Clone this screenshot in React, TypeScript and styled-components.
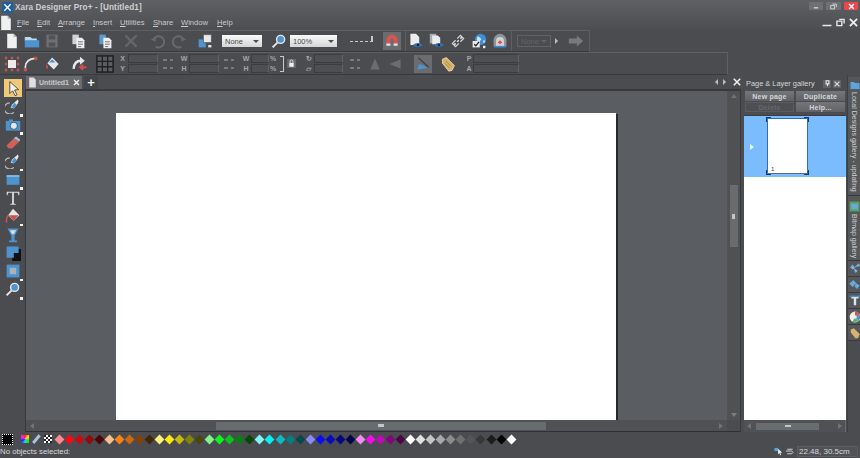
import React from "react";
import styled, { createGlobalStyle } from "styled-components";

const Global = createGlobalStyle`
  html, body { margin: 0; padding: 0; background: #4a4c50; }
  body { font-family: "Liberation Sans", Arial, sans-serif; overflow: hidden; }
  svg { flex: none; }
`;

const Ico = ({ s = 16, children }: { s?: number; children: React.ReactNode }) => (
  <svg width={s} height={s} viewBox="0 0 20 20" fill="none">
    {children}
  </svg>
);

const Doc = ({ c = "#f0f0f0" }: { c?: string }) => (
  <Ico>
    <path d="M4 1h8l4 4v14H4z" fill={c} />
    <path d="M12 1v4h4" fill="#b5b5b5" />
  </Ico>
);
const Folder = () => (
  <Ico>
    <path d="M1 5h7l2 2h6v3H1z" fill="#bcd9ee" />
    <path d="M1 9h18v9H1z" fill="#4d94cf" />
  </Ico>
);
const Save = () => (
  <Ico>
    <path d="M3 2h14v16H3z" fill="#6d6f72" />
    <path d="M6 3h8v5H6zM6 12h8v5H6z" fill="#505255" />
  </Ico>
);
const Copy = ({ paste }: { paste?: boolean }) => (
  <Ico>
    <path d="M3 2h8v12H3z" fill={paste ? "#5b9bd2" : "#cfd2d5"} />
    <path d="M8 6h7l3 3v10H8z" fill="#eeeeee" />
    <path d="M10 11h6M10 14h6M10 17h4" stroke="#55585c" />
  </Ico>
);
const Cross = ({ c = "#63666a", w = 3 }: { c?: string; w?: number }) => (
  <Ico>
    <path d="M3 3l14 14M17 3L3 17" stroke={c} strokeWidth={w} />
  </Ico>
);
const Undo = ({ flip }: { flip?: boolean }) => (
  <Ico>
    <g transform={flip ? "matrix(-1 0 0 1 20 0)" : undefined}>
      <path d="M5 7a7 7 0 1 1 2 10" stroke="#66696d" strokeWidth="2.5" />
      <path d="M1 8l6-3v6z" fill="#66696d" />
    </g>
  </Ico>
);
const Arrange = () => (
  <Ico>
    <path d="M2 8h9v10H2z" fill="#4d94cf" />
    <path d="M8 2h10v10H8z" fill="#e8e8e8" stroke="#55585c" />
    <path d="M14 15h4v3h-4z" fill="#e8e8e8" />
  </Ico>
);
const Zoom = () => (
  <Ico>
    <circle cx="12" cy="8" r="5" fill="#4d94cf" stroke="#e6e6e6" strokeWidth="1.800" />
    <path d="M8 12l-6 6" stroke="#e6e6e6" strokeWidth="2.500" />
  </Ico>
);
const Magnet = () => (
  <Ico>
    <path d="M3 15V9a7 7 0 0 1 14 0v6h-5V9a2 2 0 0 0-4 0v6z" fill="#d9534f" />
    <path d="M3 13h5v3H3zM12 13h5v3h-5z" fill="#dfe6ec" />
  </Ico>
);
const Eye = ({ stacked }: { stacked?: boolean }) => (
  <Ico>
    {stacked && <path d="M1 1h8v12H1z" fill="#a9adb1" />}
    <path d={stacked ? "M4 3h7l3 3v8H4z" : "M3 1h7l4 4v10H3z"} fill="#ececec" />
    <path d="M6 15q6-5 13 0q-7 5-13 0z" fill="#2d76b8" />
    <circle cx="12.500" cy="15" r="1.600" fill="#10263a" />
  </Ico>
);
const Chain = () => (
  <Ico>
    <path d="M5 15l2-2M13 7l2-2M9 11l2-2" stroke="#e2e2e2" strokeWidth="2" />
    <path d="M7 9l-4 4 4 4 4-4M13 11l4-4-4-4-4 4" stroke="#d5d5d5" strokeWidth="1.600" />
  </Ico>
);
const Globe = () => (
  <Ico>
    <circle cx="12" cy="8" r="7" fill="#3f8fd8" />
    <path d="M8 4q4 1 5 4l-3 3-3-2zM15 9l3 1-2 3z" fill="#cfe6f7" />
    <path d="M2 10h9v8H2z" fill="#e9e9e9" />
    <path d="M4 14l2 2 4-5" stroke="#222" strokeWidth="1.600" />
    <path d="M15 16h3v3h-3z" fill="#eee" />
  </Ico>
);
const Dome = () => (
  <Ico>
    <path d="M2 17V9a8 8 0 0 1 16 0v8z" fill="#8f9398" />
    <path d="M5 17V10a5 5 0 0 1 10 0v7z" fill="#cfd3d6" />
    <path d="M7 12l3-3 3 3-3 2z" fill="#d9534f" />
    <path d="M3 16h14v2H3z" fill="#3f8fd8" />
  </Ico>
);
const NextArrow = () => (
  <Ico>
    <path d="M1 7h10V3l8 7-8 7v-4H1z" fill="#76797d" />
  </Ico>
);
const Transform = () => (
  <Ico>
    <path d="M5 5h10v10H5z" fill="#ececec" />
    <path d="M1 1h3v3H1zM8.500 1h3v3h-3zM16 1h3v3h-3zM1 8.500h3v3H1zM16 8.500h3v3h-3zM1 16h3v3H1zM8.500 16h3v3h-3zM16 16h3v3h-3z" fill="#c8524e" />
  </Ico>
);
const Curve = () => (
  <Ico>
    <path d="M3 18V13Q4 4 15 3" stroke="#e4e4e4" strokeWidth="2" />
    <path d="M1 15h4v4H1zM14 1h4v4h-4z" fill="#c8524e" />
  </Ico>
);
const Fill = () => (
  <Ico>
    <path d="M9 2l8 8-6 7-8-8z" fill="#e8e8e8" />
    <path d="M5 8l4-4 4 4z" fill="#4d94cf" />
    <path d="M2 10q-2 5 1 6 2-2-1-6z" fill="#c8524e" />
  </Ico>
);
const Rotate = () => (
  <Ico>
    <path d="M2 16Q3 6 11 6" stroke="#e8e8e8" strokeWidth="3" />
    <path d="M10 1l6 5-6 5z" fill="#e8e8e8" />
    <path d="M11 14h7M14 11l-4 3 4 3" stroke="#c8524e" strokeWidth="2.500" />
  </Ico>
);
const GridBox = () => (
  <Ico s={18}>
    <path d="M0 0h20v20H0z" fill="#26282b" />
    <path d="M2 2h16v16H2z" fill="#5a5d61" />
    <path d="M7 1v18M13 1v18M1 7h18M1 13h18" stroke="#1f2123" strokeWidth="1.500" />
  </Ico>
);
const Lock = () => (
  <Ico s={11}>
    <path d="M2 2h16v16H2z" fill="#6a6d71" />
    <path d="M6 9h8v7H6z" fill="#f0f0f0" />
    <path d="M7.500 9V6a2.500 2.500 0 0 1 5 0v3" stroke="#f0f0f0" strokeWidth="1.500" />
  </Ico>
);
const Tag = () => (
  <Ico>
    <path d="M3 4l5-2 10 10-3 6-4 1L3 9z" fill="#d8b36e" stroke="#f0dfb4" />
    <path d="M7 6l7 7M6 9l6 6" stroke="#9a7a3f" />
  </Ico>
);
const PenTool = () => (
  <Ico>
    <path d="M4 2l13 12" stroke="#3a3c40" strokeWidth="1.500" />
    <path d="M3 17l2-7 6 2 5 3-7 1z" fill="#4d94cf" />
  </Ico>
);
const Triangle = ({ d }: { d: string }) => (
  <Ico>
    <path d={d} fill="#696c70" />
  </Ico>
);
const ArrowTool = () => (
  <Ico>
    <path d="M6 2l11 10-5 .5 3 6-2.500 1-3-6L6 17z" fill="#f5f1e6" stroke="#33302a" />
  </Ico>
);
const Brush = () => (
  <Ico>
    <path d="M6 6a7 7 0 1 0 5 12" stroke="#b8bbbe" strokeWidth="1.500" />
    <path d="M16 2q2 2 0 5l-5 6-4-1 2-4z" fill="#e8e8e8" />
    <path d="M12 6l3 3-4 4-3-2z" fill="#4d94cf" />
  </Ico>
);
const Camera = () => (
  <Ico>
    <path d="M1 5h18v12H1z" fill="#4d94cf" />
    <path d="M5 3h5v2H5z" fill="#4d94cf" />
    <circle cx="11" cy="11" r="4.500" fill="#dfe7ee" stroke="#26455f" />
  </Ico>
);
const Eraser = () => (
  <Ico>
    <path d="M2 13l9-9 7 4-9 9-5-.5z" fill="#d0605a" />
    <path d="M11 4l3-2 5 4-1 2z" fill="#9cc3e0" />
  </Ico>
);
const Rect = () => (
  <Ico>
    <path d="M2 4h16v12H2z" fill="#4d94cf" />
    <path d="M2 4h16v2H2z" fill="#8dbde4" />
  </Ico>
);
const TextTool = () => (
  <Ico s={18}>
    <path d="M3 3h14v4h-.8l-1-2.800h-4.200v11.800l2 .8v.700H7v-.700l2-.8V4.200H4.800L3.800 7H3z" fill="#dcdcdc" />
  </Ico>
);
const Bucket = () => (
  <Ico>
    <path d="M10 1l8 8-7 7-7-7z" fill="#e6e6e6" />
    <path d="M5 9h12l-6 7z" fill="#c8524e" />
    <path d="M4 9q-3 4-2 9" stroke="#c8524e" strokeWidth="2" />
  </Ico>
);
const Glass = () => (
  <Ico>
    <path d="M3 2h14l-5 9v6h3v2H5v-2h3v-6z" fill="#4d94cf" />
    <path d="M6 4h8l-3 5H9z" fill="#dcdcdc" />
  </Ico>
);
const Shadow = () => (
  <Ico>
    <path d="M5 5h15v15H9v-6H5z" fill="#111" />
    <path d="M2 2h15v8h-6v6H2z" fill="#4d94cf" />
  </Ico>
);
const Bevel = () => (
  <Ico>
    <path d="M2 2h16v16H2z" fill="#4d94cf" />
    <path d="M6 6h8v8H6z" fill="#a9b2ba" />
  </Ico>
);
const Blocks = () => (
  <Ico s={13}>
    <path d="M3 8l4-4 4 4-4 4zM9 14l3-3 3 3-3 3zM13 5l3-3 3 3-3 3z" fill="#67a8dc" />
    <path d="M7 8l6 6M11 8l4-3" stroke="#eee" />
  </Ico>
);
const Wheel = () => (
  <Ico s={12}>
    <circle cx="10" cy="10" r="9" fill="#eeeeee" />
    <path d="M10 10V1a9 9 0 0 1 8 5z" fill="#d9534f" />
    <path d="M10 10l8-4a9 9 0 0 1-2 10z" fill="#4d94cf" />
    <path d="M10 10l6 6a9 9 0 0 1-10 2z" fill="#58b368" />
    <circle cx="10" cy="10" r="3" fill="#eee" />
  </Ico>
);

const CornerMark = styled.span`
  position: absolute;
  right: -1px;
  bottom: -1px;
  width: 2.500px;
  height: 2.500px;
  background: #f4f4f4;
`;

const Window = styled.div`
  width: 860px;
  height: 458px;
  display: flex;
  flex-direction: column;
  overflow: hidden;
  background: #4a4c50;
  color: #d4d5d6;
`;

const TitleBar = styled.div`
  height: 15px;
  flex: none;
  display: flex;
  align-items: center;
  padding: 0 2px;
  background: linear-gradient(#5e6063, #55575a);
`;

const AppLogo = styled.div`
  width: 11px;
  height: 11px;
  background: #1c5fa3;
  display: flex;
  align-items: center;
  justify-content: center;
`;

const TitleText = styled.div`
  margin-left: 2px;
  font-size: 8.200px;
  font-weight: 700;
  color: #cfd0d1;
  letter-spacing: 0.1px;
  white-space: nowrap;
`;

const Caps = styled.div`
  margin-left: auto;
  display: flex;
  gap: 3px;
  align-self: flex-start;
  margin-top: 2px;
`;

const CapButton = styled.div<{ $w: number; $red?: boolean }>`
  width: ${(p) => p.$w}px;
  height: 8px;
  border-radius: 1px;
  background: ${(p) => (p.$red ? "#e8474c" : "#6e7073")};
  display: flex;
  align-items: center;
  justify-content: center;
`;

const MenuBar = styled.div`
  height: 15px;
  flex: none;
  display: flex;
  align-items: center;
  background: linear-gradient(#55575a, #4c4e51);
`;

const MenuDoc = styled.div`
  width: 15px;
  height: 15px;
  display: flex;
  align-items: center;
  margin-left: -2px;
  margin-right: 4px;
`;

const MenuItem = styled.span<{ $w: number }>`
  width: ${(p) => p.$w}px;
  font-size: 7.600px;
  color: #c9cacb;
  white-space: nowrap;
`;

const MdiCaps = styled.div`
  margin-left: auto;
  margin-right: 2px;
  display: flex;
  gap: 4px;
  align-items: center;
`;

const ToolRow = styled.div<{ $w: number; $h: number }>`
  width: ${(p) => p.$w}px;
  height: ${(p) => p.$h}px;
  flex: none;
  box-sizing: border-box;
  display: flex;
  align-items: center;
  border-top: 1px solid #5e6063;
  border-right: 1px solid #5e6063;
  border-bottom: 1px solid #38393c;
  background: #4a4c50;
`;

const Slot = styled.div<{ $w?: number; $ml?: number }>`
  flex: none;
  width: ${(p) => p.$w ?? 20}px;
  margin-left: ${(p) => p.$ml ?? 0}px;
  display: flex;
  align-items: center;
  justify-content: center;
  position: relative;
`;

const Pressed = styled(Slot)`
  height: 18px;
  background: #6a6d70;
`;

const Select = styled.div<{ $w: number; $ml: number; $off?: boolean }>`
  flex: none;
  box-sizing: border-box;
  width: ${(p) => p.$w}px;
  height: 12px;
  margin-left: ${(p) => p.$ml}px;
  padding: 0 3px;
  display: flex;
  align-items: center;
  justify-content: space-between;
  font-size: 7.500px;
  color: ${(p) => (p.$off ? "#626468" : "#4a4c50")};
  background: ${(p) => (p.$off ? "transparent" : "linear-gradient(#fafafa,#d5d6d7)")};
  border: ${(p) => (p.$off ? "1px solid #606266" : "none")};
  &::after {
    content: "";
    border: 3px solid transparent;
    border-top: 3.500px solid ${(p) => (p.$off ? "#626468" : "#4a4c50")};
    margin-top: 3px;
  }
`;

const Divider = styled.div<{ $ml: number }>`
  flex: none;
  width: 1px;
  align-self: stretch;
  margin-left: ${(p) => p.$ml}px;
  background: #5d5f62;
`;

const DashLine = styled.div<{ $ml: number }>`
  flex: none;
  width: 23px;
  margin-left: ${(p) => p.$ml}px;
  border-top: 1px dashed #c7c8c9;
  position: relative;
  &::after {
    content: "";
    position: absolute;
    right: 0;
    top: -6px;
    height: 6px;
    border-right: 2px solid #c7c8c9;
  }
`;

const FieldGroup = styled.div<{ $ml?: number }>`
  flex: none;
  margin-left: ${(p) => p.$ml ?? 0}px;
  display: grid;
  grid-auto-flow: column;
  grid-template-rows: 10px 10px;
  align-items: center;
  font-size: 7px;
  font-weight: 700;
  color: #a4a6a8;
  text-align: center;
`;

const Field = styled.div<{ $w: number }>`
  box-sizing: border-box;
  width: ${(p) => p.$w}px;
  height: 9px;
  border: 1px solid #3b3c3f;
  border-right-color: #616366;
  background: #4d4f53;
`;

const Label = styled.span<{ $w: number }>`
  width: ${(p) => p.$w}px;
`;

const Nudge = styled.div<{ $ml: number }>`
  flex: none;
  width: 10px;
  margin-left: ${(p) => p.$ml}px;
  display: grid;
  grid-template-columns: 1fr 1fr;
  gap: 6px 3px;
  span {
    height: 2px;
    background: #787a7d;
  }
`;

const Brace = styled.div`
  flex: none;
  width: 3px;
  height: 14px;
  margin-left: 3px;
  border: 1px solid #c8c9ca;
  border-left: none;
`;

const Workspace = styled.div`
  flex: 1;
  min-height: 0;
  display: flex;
`;

const ToolColumn = styled.div`
  width: 25px;
  flex: none;
  padding-top: 4px;
  display: flex;
  flex-direction: column;
  align-items: center;
  box-sizing: border-box;
  background: #4a4c50;
`;

const SideTool = styled.div<{ $active?: boolean }>`
  width: 18px;
  height: 18.300px;
  flex: none;
  box-sizing: border-box;
  position: relative;
  display: flex;
  align-items: center;
  justify-content: center;
  background: ${(p) => (p.$active ? "#f1c878" : "transparent")};
`;

const DocColumn = styled.div`
  width: 716px;
  flex: none;
  display: flex;
  flex-direction: column;
`;

const TabStrip = styled.div`
  height: 16px;
  flex: none;
  display: flex;
  align-items: flex-end;
  padding-left: 1px;
  box-sizing: border-box;
  border-bottom: 2px solid #38393c;
`;

const DocTab = styled.div`
  width: 56px;
  height: 13px;
  box-sizing: border-box;
  padding: 0 2px 0 1px;
  display: flex;
  align-items: center;
  gap: 1px;
  background: #696b6e;
  font-size: 7px;
  font-weight: 700;
  color: #c8cacb;
  span:last-child {
    margin-left: auto;
    display: flex;
  }
`;

const PlusTab = styled.div`
  width: 14px;
  height: 13px;
  margin-left: 2px;
  display: flex;
  align-items: center;
  justify-content: center;
  font-size: 13px;
  font-weight: 700;
  line-height: 1;
  color: #f2f2f2;
  background: #434548;
`;

const TabNav = styled.div`
  margin-left: auto;
  width: 26px;
  height: 14px;
  display: flex;
  align-items: center;
  gap: 4px;
  margin-right: 1px;
`;

const Tri = styled.span<{ $left?: boolean }>`
  border: 3px solid transparent;
  border-left-color: ${(p) => (p.$left ? "transparent" : "#bcbdbe")};
  border-right-color: ${(p) => (p.$left ? "#bcbdbe" : "transparent")};
  margin-left: ${(p) => (p.$left ? -2 : 1)}px;
`;

const CanvasFrame = styled.div`
  flex: 1;
  min-height: 0;
  display: grid;
  grid-template-columns: 1fr 13px;
  grid-template-rows: 1fr 11px;
  border-left: 1px solid #38393c;
  border-right: 1px solid #38393c;
  border-bottom: 1px solid #2f3032;
  background: #4f5155;
`;

const Pasteboard = styled.div`
  min-height: 0;
  overflow: hidden;
  padding: 22px 0 0 90px;
  background: #5a5d61;
  display: flex;
  flex-direction: column;
`;

const Sheet = styled.div`
  width: 500px;
  flex: 1;
  background: #fff;
  box-shadow: 2px 1px 0 #26282a;
`;

const VScroll = styled.div`
  display: flex;
  flex-direction: column;
  align-items: center;
  padding: 3px 0;
  background: #4f5155;
  box-sizing: border-box;
`;

const ScrollArrow = styled.span<{ $dir: "up" | "down" | "left" | "right" }>`
  width: 0;
  height: 0;
  flex: none;
  border: 3px solid transparent;
  ${(p) => (p.$dir === "up" ? "border-bottom: 4px solid #6f7174; border-top: 0;" : "")}
  ${(p) => (p.$dir === "down" ? "border-top: 4px solid #7b7d80; border-bottom: 0;" : "")}
  ${(p) => (p.$dir === "left" ? "border-right: 4px solid #717376; border-left: 0;" : "")}
  ${(p) => (p.$dir === "right" ? "border-left: 4px solid #717376; border-right: 0;" : "")}
`;

const VThumb = styled.div`
  width: 8px;
  height: 62px;
  margin: 87px 0 auto;
  background: #696c6f;
  display: flex;
  align-items: center;
  justify-content: center;
  &::after {
    content: "";
    width: 3px;
    height: 5px;
    background: #c4c5c6;
  }
`;

const HScroll = styled.div<{ $thumbLeft: number; $thumbWidth: number }>`
  display: flex;
  align-items: center;
  padding: 0 4px;
  box-sizing: border-box;
  background: #4f5155;
  & > div {
    width: ${(p) => p.$thumbWidth}px;
    height: 8px;
    margin-left: ${(p) => p.$thumbLeft}px;
    margin-right: auto;
    background: #696c6f;
    display: flex;
    align-items: center;
    justify-content: center;
  }
  & > div::after {
    content: "";
    width: 6px;
    height: 3px;
    background: #c4c5c6;
  }
`;

const Corner = styled.div`
  background: #4a4c50;
`;

const Gallery = styled.div`
  width: 103px;
  margin-left: 3px;
  flex: none;
  display: flex;
  flex-direction: column;
`;

const GalleryHead = styled.div`
  height: 16px;
  flex: none;
  display: flex;
  align-items: center;
  padding: 1px 0 0 2px;
  box-sizing: border-box;
  font-size: 7.400px;
  color: #d6d7d8;
  white-space: nowrap;
`;

const HeadTools = styled.div`
  margin-left: auto;
  display: flex;
  gap: 2px;
  margin-right: 6px;
`;

const HeadBtn = styled.div`
  width: 8px;
  height: 8px;
  background: #606266;
  display: flex;
  align-items: center;
  justify-content: center;
`;

const ButtonGrid = styled.div`
  display: grid;
  grid-template-columns: 49px 49px;
  grid-auto-rows: 10px;
  gap: 1px 2px;
  height: 22px;
  margin-left: 1px;
  flex: none;
`;

const GalleryButton = styled.div<{ $off?: boolean }>`
  display: flex;
  align-items: center;
  justify-content: center;
  font-size: 7px;
  font-weight: 700;
  letter-spacing: 0.2px;
  color: ${(p) => (p.$off ? "#65676a" : "#d4d5d6")};
  background: ${(p) => (p.$off ? "#4d4f52" : "linear-gradient(#74777a,#606266)")};
  border: ${(p) => (p.$off ? "1px solid #5a5c5f" : "none")};
`;

const GalleryList = styled.div`
  flex: 1;
  min-height: 0;
  margin-top: 2px;
  background: #fff;
  margin-right: 1px;
  border-top: 1px solid #3b3c3f;
`;

const PageRow = styled.div`
  height: 61px;
  box-sizing: border-box;
  padding: 2px 0 0 23px;
  background: #7bbcff;
  position: relative;
  display: flex;
  align-items: flex-start;
`;

const RowMark = styled.span`
  position: absolute;
  left: 6px;
  top: 28px;
  border: 3px solid transparent;
  border-left: 4px solid #eaf3ff;
  border-right: 0;
`;

const Thumb = styled.div`
  position: relative;
  width: 41px;
  height: 56px;
  box-sizing: border-box;
  background: #fff;
  border: 1px solid #2f6fb3;
  border-bottom: 1.500px solid #5f6f80;
  font-size: 6px;
  color: #444;
  display: flex;
  align-items: flex-end;
  padding: 0 3px 1px;
`;

const Tick = styled.i<{ $x: "left" | "right"; $y: "top" | "bottom" }>`
  position: absolute;
  ${(p) => p.$x}: -2px;
  ${(p) => p.$y}: -2px;
  width: 4px;
  height: 4px;
  border: 0 solid #123a66;
  ${(p) => `border-${p.$x}-width: 1.500px; border-${p.$y}-width: 1.500px;`}
`;

const GalleryScroll = styled.div`
  height: 12px;
  flex: none;
  display: flex;
  align-items: center;
  padding: 0 3px;
  background: #4f5155;
  border-right: 1px solid #6a6c6f;
  margin-right: 1px;
  box-sizing: border-box;
  & > div {
    width: 63px;
    height: 7px;
    margin: 0 auto 0 5px;
    background: #6a6d70;
    display: flex;
    align-items: center;
    justify-content: center;
  }
  & > div::after {
    content: "";
    width: 6px;
    height: 2px;
    background: #c4c5c6;
  }
`;

const SideStrip = styled.div`
  width: 14px;
  flex: none;
  padding-top: 2px;
  display: flex;
  flex-direction: column;
  align-items: center;
  border-left: 1px solid #3e3f42;
  box-sizing: border-box;
`;

const SideTab = styled.div<{ $h: number; $pt: number }>`
  width: 13px;
  height: ${(p) => p.$h}px;
  flex: none;
  box-sizing: border-box;
  padding-top: ${(p) => p.$pt}px;
  display: flex;
  flex-direction: column;
  align-items: center;
  gap: 2px;
  background: #55575a;
  border-bottom: 1px solid #38393c;
`;

const SideText = styled.span`
  writing-mode: vertical-rl;
  font-size: 7px;
  line-height: 1;
  color: #d0d2d3;
  white-space: nowrap;
`;

const SideButton = styled.div`
  width: 13px;
  height: 15px;
  flex: none;
  display: flex;
  align-items: center;
  justify-content: center;
  background: #55575a;
  border-bottom: 1px solid #3a3b3e;
`;

const PaletteRow = styled.div`
  height: 13px;
  flex: none;
  display: flex;
  align-items: center;
  padding-top: 1px;
  box-sizing: border-box;
`;

const LineFill = styled.div`
  width: 9px;
  height: 9px;
  margin-left: 2px;
  background: #000;
  border: 1px dotted #fff;
  flex: none;
`;

const ColourPick = styled.div`
  width: 8px;
  height: 8px;
  margin-left: 8px;
  flex: none;
  background: conic-gradient(#ff2020, #ffe020, #20e020, #20e0e0, #2020ff, #ff20ff, #ff2020);
`;

const Dropper = styled.div`
  width: 2.500px;
  height: 10px;
  margin-left: 6px;
  flex: none;
  transform: rotate(40deg);
  background: #a8c4da;
`;

const NoColour = styled.div`
  width: 8px;
  height: 8px;
  margin-left: 6px;
  flex: none;
  background: repeating-conic-gradient(#fff 0 25%, #222 0 50%) 0 0 / 4px 4px;
`;

const Swatches = styled.div`
  display: flex;
  margin-left: 2.500px;
`;

const Swatch = styled.div<{ $c: string }>`
  width: 10.060px;
  height: 10px;
  flex: none;
  position: relative;
  &::after {
    content: "";
    position: absolute;
    left: 1.500px;
    top: 1.500px;
    width: 7px;
    height: 7px;
    transform: rotate(45deg);
    background: ${(p) => p.$c};
  }
`;

const StatusBar = styled.div`
  height: 13px;
  flex: none;
  display: flex;
  align-items: center;
  font-size: 7.800px;
  color: #d8d9da;
`;

const StatusIcons = styled.div`
  margin-left: auto;
  display: flex;
  align-items: center;
  gap: 1px;
`;

const Coords = styled.div`
  box-sizing: border-box;
  width: 61px;
  height: 11px;
  margin: 0 2px 0 1px;
  padding-left: 1px;
  display: flex;
  align-items: center;
  font-size: 8px;
  background: #505256;
  border: 1px solid #5c5e62;
`;

const menu: [string, string, number][] = [
  ["F", "ile", 20],
  ["E", "dit", 21],
  ["A", "rrange", 35],
  ["I", "nsert", 27],
  ["U", "tilities", 33],
  ["S", "hare", 28],
  ["W", "indow", 36],
  ["H", "elp", 24],
];

const swatches = [
  "#f98a90", "#f40b14", "#c80a12", "#900a10", "#4c0508",
  "#fbbf8d", "#f8850d", "#c9690c", "#7f4309", "#462406",
  "#fdf07f", "#fbe80c", "#c6b80c", "#87800a", "#4c4706",
  "#7ff58a", "#0df41f", "#0ac41a", "#088012", "#05480a",
  "#7ff5f5", "#08eef5", "#08bcc2", "#067e82", "#044a4c",
  "#8a8af5", "#0c0cf0", "#0a0ac0", "#080880", "#05054c",
  "#f58af0", "#f40ce8", "#c00ab8", "#800878", "#4c0546",
  "#ffffff", "#e0e0e0", "#c4c4c4", "#a8a8a8", "#8c8c8c",
  "#707070", "#545658", "#383838", "#1c1c1c", "#000000", "#ffffff",
];

const SideTools = [
  <ArrowTool />, <Brush />, <Camera />, <Eraser />, <Brush />, <Rect />, <TextTool />,
  <Bucket />, <Glass />, <Shadow />, <Bevel />, <Zoom />,
];

const withMark = [false, true, true, false, true, true, false, true, false, false, true, true];

export default function App() {
  return (
    <Window>
      <Global />
      <TitleBar>
        <AppLogo>
          <Ico s={9}>
            <path d="M3 3l14 14M17 3L3 17" stroke="#fff" strokeWidth="3" />
          </Ico>
        </AppLogo>
        <TitleText>Xara Designer Pro+ - [Untitled1]</TitleText>
        <Caps>
          <CapButton $w={14}>
            <Ico s={6}><path d="M3 16h14" stroke="#ddd" strokeWidth="4" /></Ico>
          </CapButton>
          <CapButton $w={15}>
            <Ico s={7}><path d="M2 7h11v10H2zM7 3h11v9" stroke="#ddd" strokeWidth="2.500" /></Ico>
          </CapButton>
          <CapButton $w={14} $red>
            <Ico s={7}><path d="M3 3l14 14M17 3L3 17" stroke="#fff" strokeWidth="4" /></Ico>
          </CapButton>
        </Caps>
      </TitleBar>

      <MenuBar>
        <MenuDoc><Doc /></MenuDoc>
        {menu.map(([a, b, w]) => (
          <MenuItem key={a} $w={w}><u>{a}</u>{b}</MenuItem>
        ))}
        <MdiCaps>
          <Ico s={10}><path d="M1 15h18" stroke="#e8e8e8" strokeWidth="3" /></Ico>
          <Ico s={9}><path d="M2 7h11v10H2zM7 3h11v9" stroke="#e8e8e8" strokeWidth="3" /></Ico>
          <Ico s={9}><path d="M2 2l16 16M18 2L2 18" stroke="#eee" strokeWidth="4" /></Ico>
        </MdiCaps>
      </MenuBar>

      <ToolRow $w={590} $h={22}>
        <Slot $ml={2}><Doc /></Slot>
        <Slot><Folder /></Slot>
        <Slot><Save /></Slot>
        <Slot $ml={6}><Copy /></Slot>
        <Slot $ml={7}><Copy paste /></Slot>
        <Slot $ml={6}><Cross /></Slot>
        <Slot $ml={7}><Undo /></Slot>
        <Slot $ml={1}><Undo flip /></Slot>
        <Slot $ml={6}><Arrange /></Slot>
        <Select $w={40} $ml={7}>None</Select>
        <Slot $ml={7}><Zoom /></Slot>
        <Select $w={47} $ml={1}>100%</Select>
        <DashLine $ml={13} />
        <Pressed $w={18} $ml={10}><Magnet /></Pressed>
        <Divider $ml={4} />
        <Slot><Eye /></Slot>
        <Slot $ml={1}><Eye stacked /></Slot>
        <Slot $ml={1}><Chain /></Slot>
        <Slot $ml={1}><Globe /></Slot>
        <Slot $ml={1}><Dome /></Slot>
        <Divider $ml={1} />
        <Select $w={34} $ml={5} $off>None</Select>
        <Slot $w={8} $ml={2}><Tri /></Slot>
        <Slot $ml={5}><NextArrow /></Slot>
      </ToolRow>

      <ToolRow $w={728} $h={23}>
        <Slot $ml={2}><Transform /></Slot>
        <Slot $w={18}><Curve /></Slot>
        <Slot $w={22} $ml={2}><Fill /></Slot>
        <Slot $ml={6}><Rotate /></Slot>
        <Slot $ml={6} $w={18}><GridBox /></Slot>
        <FieldGroup $ml={3}>
          <Label $w={11}>X</Label><Label $w={11}>Y</Label>
          <Field $w={30} /><Field $w={30} />
        </FieldGroup>
        <Nudge $ml={5}><span /><span /><span /><span /></Nudge>
        <FieldGroup $ml={6}>
          <Label $w={10}>W</Label><Label $w={10}>H</Label>
          <Field $w={30} /><Field $w={30} />
        </FieldGroup>
        <Nudge $ml={5}><span /><span /><span /><span /></Nudge>
        <FieldGroup $ml={7}>
          <Label $w={10}>W</Label><Label $w={10}>H</Label>
          <Field $w={18} /><Field $w={18} />
          <Label $w={8}>%</Label><Label $w={8}>%</Label>
        </FieldGroup>
        <Brace />
        <Slot $w={11} $ml={2}><Lock /></Slot>
        <FieldGroup $ml={6}>
          <Label $w={11}>↻</Label><Label $w={11}>▱</Label>
          <Field $w={29} /><Field $w={29} />
        </FieldGroup>
        <Nudge $ml={7}><span /><span /><span /><span /></Nudge>
        <Slot $ml={5}><Triangle d="M10 3l6 14H4z" /></Slot>
        <Slot><Triangle d="M3 10l14-6v12z" /></Slot>
        <Pressed $w={18} $ml={9}><PenTool /></Pressed>
        <Slot $ml={6}><Tag /></Slot>
        <FieldGroup $ml={7}>
          <Label $w={8}>P</Label><Label $w={8}>A</Label>
          <Field $w={46} /><Field $w={46} />
        </FieldGroup>
      </ToolRow>

      <Workspace>
        <ToolColumn>
          {SideTools.map((icon, i) => (
            <SideTool key={i} $active={i === 0}>
              {icon}
              {withMark[i] && <CornerMark />}
            </SideTool>
          ))}
        </ToolColumn>

        <DocColumn>
          <TabStrip>
            <DocTab>
              <Ico s={11}><path d="M4 1h8l4 4v14H4z" fill="#e0e0e0" /></Ico>
              <span>Untitled1</span>
              <span><Ico s={7}><path d="M3 3l14 14M17 3L3 17" stroke="#eee" strokeWidth="4" /></Ico></span>
            </DocTab>
            <PlusTab>+</PlusTab>
            <TabNav>
              <Tri $left />
              <Tri />
              <Ico s={8}><path d="M2 2l16 16M18 2L2 18" stroke="#eee" strokeWidth="4" /></Ico>
            </TabNav>
          </TabStrip>
          <CanvasFrame>
            <Pasteboard><Sheet /></Pasteboard>
            <VScroll>
              <ScrollArrow $dir="up" />
              <VThumb />
              <ScrollArrow $dir="down" />
            </VScroll>
            <HScroll $thumbLeft={182} $thumbWidth={330}>
              <ScrollArrow $dir="left" />
              <div />
              <ScrollArrow $dir="right" />
            </HScroll>
            <Corner />
          </CanvasFrame>
        </DocColumn>

        <Gallery>
          <GalleryHead>
            Page &amp; Layer gallery
            <HeadTools>
              <HeadBtn><Ico s={7}><path d="M6 2h8v9H6zM10 11v7" stroke="#eee" strokeWidth="3" /></Ico></HeadBtn>
              <HeadBtn><Ico s={6}><path d="M2 2l16 16M18 2L2 18" stroke="#ddd" strokeWidth="4" /></Ico></HeadBtn>
            </HeadTools>
          </GalleryHead>
          <ButtonGrid>
            <GalleryButton>New page</GalleryButton>
            <GalleryButton>Duplicate</GalleryButton>
            <GalleryButton $off>Delete</GalleryButton>
            <GalleryButton>Help...</GalleryButton>
          </ButtonGrid>
          <GalleryList>
            <PageRow>
              <RowMark />
              <Thumb>
                1
                <Tick $x="left" $y="top" />
                <Tick $x="right" $y="top" />
                <Tick $x="left" $y="bottom" />
                <Tick $x="right" $y="bottom" />
              </Thumb>
            </PageRow>
          </GalleryList>
          <GalleryScroll>
            <ScrollArrow $dir="left" />
            <div />
            <ScrollArrow $dir="right" />
          </GalleryScroll>
        </Gallery>

        <SideStrip>
          <SideTab $h={119} $pt={3}>
            <Ico s={10}><path d="M1 4h7l2 2h9v12H1z" fill="#5aa5de" /></Ico>
            <SideText>Local Designs gallery - updating</SideText>
          </SideTab>
          <SideTab $h={65} $pt={5}>
            <Ico s={11}><path d="M1 1h18v18H1z" fill="#58a35c" /><path d="M4 5h12v10H4z" fill="#6aa8dd" /></Ico>
            <SideText>Bitmap gallery</SideText>
          </SideTab>
          <SideButton><Blocks /></SideButton>
          <SideButton><Ico s={13}><path d="M2 9l6-6 5 5-6 6zM10 13l3-5 5 4-4 5z" fill="#67a8dc" /></Ico></SideButton>
          <SideButton><Ico s={12}><path d="M4 3h12v3h-4v11H8V6H4z" fill="#dbe6ef" /><path d="M1 1h18v2H1z" fill="#4d94cf" /></Ico></SideButton>
          <SideButton><Wheel /></SideButton>
          <SideButton><Ico s={12}><path d="M3 4l5-2 10 10-3 6-4 1L3 9z" fill="#d8b36e" /></Ico></SideButton>
        </SideStrip>
      </Workspace>

      <PaletteRow>
        <LineFill />
        <ColourPick />
        <Dropper />
        <NoColour />
        <Swatches>
          {swatches.map((c, i) => <Swatch key={i} $c={c} />)}
        </Swatches>
      </PaletteRow>

      <StatusBar>
        No objects selected:
        <StatusIcons>
          <Ico s={9}><path d="M1 2h8v7H1z" fill="#5aa5de" /><path d="M9 4l9 8-4 .5 2 5-2 1-2-5-3 3z" fill="#eee" /></Ico>
          <Slot $w={11}><Ico s={9}><path d="M2 9h13l3 3-3 3H5M5 5h12" stroke="#e0e0e0" strokeWidth="2" /></Ico></Slot>
          <Coords>22.48, 30.5cm</Coords>
        </StatusIcons>
      </StatusBar>
    </Window>
  );
}
